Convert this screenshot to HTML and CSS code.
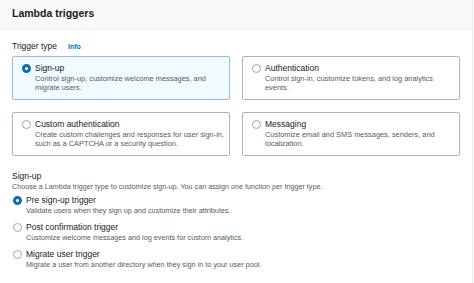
FILE: index.html
```html
<!DOCTYPE html>
<html>
<head>
<meta charset="utf-8">
<link rel="stylesheet" href="styles.css">
</head>
<body>
<div class="card">
  <div class="card-header"><h2 class="title">Lambda triggers</h2></div>
  <div class="card-body">
    <div class="field-label"><span>Trigger type</span><span class="sep"></span><a class="info">Info</a></div>
    <div class="tiles">
      <div class="tile selected">
        <span class="radio checked"></span>
        <div class="tile-text">
          <div class="tile-title">Sign-up</div>
          <div class="desc">Control sign-up, customize welcome messages, and migrate users.</div>
        </div>
      </div>
      <div class="tile">
        <span class="radio"></span>
        <div class="tile-text">
          <div class="tile-title">Authentication</div>
          <div class="desc">Control sign-in, customize tokens, and log analytics events.</div>
        </div>
      </div>
      <div class="tile">
        <span class="radio"></span>
        <div class="tile-text">
          <div class="tile-title">Custom authentication</div>
          <div class="desc">Create custom challenges and responses for user sign-in, such as a CAPTCHA or a security question.</div>
        </div>
      </div>
      <div class="tile">
        <span class="radio"></span>
        <div class="tile-text">
          <div class="tile-title">Messaging</div>
          <div class="desc">Customize email and SMS messages, senders, and localization.</div>
        </div>
      </div>
    </div>
    <div class="section">
      <div class="section-title">Sign-up</div>
      <div class="desc section-desc">Choose a Lambda trigger type to customize sign-up. You can assign one function per trigger type.</div>
      <div class="options">
        <div class="option">
          <span class="radio checked"></span>
          <div>
            <div class="opt-label">Pre sign-up trigger</div>
            <div class="desc opt-desc">Validate users when they sign up and customize their attributes.</div>
          </div>
        </div>
        <div class="option">
          <span class="radio"></span>
          <div>
            <div class="opt-label">Post confirmation trigger</div>
            <div class="desc opt-desc">Customize welcome messages and log events for custom analytics.</div>
          </div>
        </div>
        <div class="option">
          <span class="radio"></span>
          <div>
            <div class="opt-label">Migrate user trigger</div>
            <div class="desc opt-desc">Migrate a user from another directory when they sign in to your user pool.</div>
          </div>
        </div>
      </div>
    </div>
  </div>
</div>
</body>
</html>
```
FILE: styles.css
```css
html, body {
  margin: 0;
  padding: 0;
  background: #ffffff;
}
body {
  font-family: "Liberation Sans", Arial, sans-serif;
  color: #16191f;
  width: 474px;
  height: 283px;
  overflow: hidden;
}
.card {
  width: 473px;
  height: 283px;
  border-right: 1px solid #eaeded;
  box-sizing: border-box;
}
.card-header {
  height: 29px;
  background: #fafafa;
  border-bottom: 1px solid #eef0f0;
  padding: 0 12px;
  display: flex;
  align-items: center;
}
.title {
  margin: 0;
  margin-top: -3px;
  font-size: 10.5px;
  font-weight: bold;
  line-height: 13px;
  color: #16191f;
}
.card-body {
  padding: 11px 12px 0 12px;
}
.field-label {
  display: flex;
  align-items: center;
  font-size: 8.5px;
  line-height: 11px;
  color: #16191f;
}
.sep {
  width: 1px;
  height: 8px;
  background: #f0f2f2;
  margin: 0 5px;
}
.info {
  font-size: 7px;
  font-weight: bold;
  color: #0073bb;
}
.tiles {
  margin-top: 3.5px;
  display: grid;
  grid-template-columns: 1fr 1fr;
  gap: 12px;
}
.tile {
  display: flex;
  align-items: flex-start;
  gap: 4px;
  border: 1px solid #aab7b8;
  border-radius: 2px;
  padding: 6px 3px 5px 9px;
  height: 44px;
  box-sizing: border-box;
}
.tile.selected {
  border-color: #8dbde0;
  background: #f1faff;
}
.radio {
  flex: none;
  width: 9px;
  height: 9px;
  border-radius: 50%;
  border: 1px solid #9ba7a8;
  background: #fff;
  box-sizing: border-box;
  margin-top: 1px;
}
.radio.checked {
  border: 3px solid #0f6db2;
}
.tile-title {
  font-size: 8.5px;
  line-height: 11px;
  color: #16191f;
}
.desc {
  font-size: 7.4px;
  line-height: 9.5px;
  color: #545b64;
}
.section {
  margin-top: 15px;
}
.section-title {
  font-size: 8.5px;
  line-height: 11px;
  color: #16191f;
}
.section-desc {
  font-size: 7.2px;
}
.options {
  margin-top: 3.5px;
  display: flex;
  flex-direction: column;
  gap: 6px;
}
.option {
  display: flex;
  align-items: flex-start;
  gap: 4px;
  padding-left: 1px;
}
.opt-label {
  font-size: 8.5px;
  line-height: 11px;
  color: #16191f;
}
.opt-desc {
  font-size: 7.25px;
  line-height: 10px;
}
```
